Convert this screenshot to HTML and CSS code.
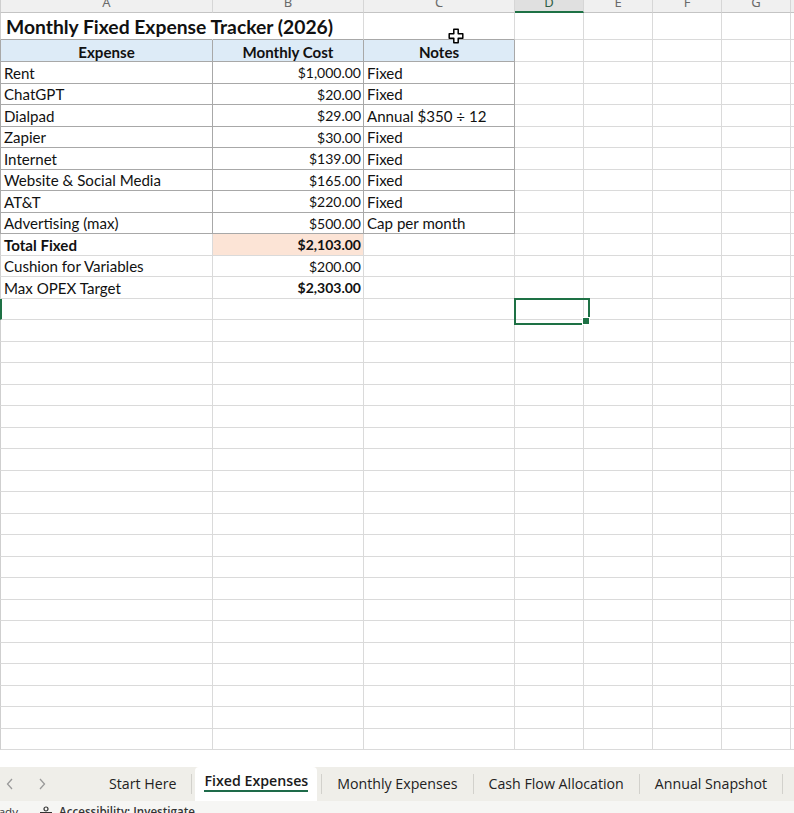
FILE: index.html
```html
<!DOCTYPE html>
<html>
<head>
<meta charset="utf-8">
<link rel="stylesheet" href="styles.css">
</head>
<body>
<div class="sheet">
  <div class="row colhdr">
    <i class="c"><span>A</span></i><i class="c"><span>B</span></i><i class="c"><span>C</span></i><i class="c selcol"><span>D</span></i><i class="c"><span>E</span></i><i class="c"><span>F</span></i><i class="c"><span>G</span></i><i class="c"></i>
  </div>
  <div class="row title">
    <i class="c tb nr title-text">Monthly Fixed Expense Tracker (2026)</i><i class="c tb"></i><i class="c tb"></i><i class="c"></i><i class="c"></i><i class="c"></i><i class="c"></i><i class="c"></i>
  </div>
  <div class="row hdr">
    <i class="c t h">Expense</i><i class="c t h">Monthly Cost</i><i class="c t h">Notes</i><i class="c"></i><i class="c"></i><i class="c"></i><i class="c"></i><i class="c"></i>
  </div>
  <div class="row d"><i class="c t">Rent</i><i class="c t n">$1,000.00</i><i class="c t">Fixed</i><i class="c"></i><i class="c"></i><i class="c"></i><i class="c"></i><i class="c"></i></div>
  <div class="row d"><i class="c t">ChatGPT</i><i class="c t n">$20.00</i><i class="c t">Fixed</i><i class="c"></i><i class="c"></i><i class="c"></i><i class="c"></i><i class="c"></i></div>
  <div class="row d"><i class="c t">Dialpad</i><i class="c t n">$29.00</i><i class="c t">Annual $350 ÷ 12</i><i class="c"></i><i class="c"></i><i class="c"></i><i class="c"></i><i class="c"></i></div>
  <div class="row d"><i class="c t">Zapier</i><i class="c t n">$30.00</i><i class="c t">Fixed</i><i class="c"></i><i class="c"></i><i class="c"></i><i class="c"></i><i class="c"></i></div>
  <div class="row d"><i class="c t">Internet</i><i class="c t n">$139.00</i><i class="c t">Fixed</i><i class="c"></i><i class="c"></i><i class="c"></i><i class="c"></i><i class="c"></i></div>
  <div class="row d"><i class="c t">Website &amp; Social Media</i><i class="c t n">$165.00</i><i class="c t">Fixed</i><i class="c"></i><i class="c"></i><i class="c"></i><i class="c"></i><i class="c"></i></div>
  <div class="row d"><i class="c t">AT&amp;T</i><i class="c t n">$220.00</i><i class="c t">Fixed</i><i class="c"></i><i class="c"></i><i class="c"></i><i class="c"></i><i class="c"></i></div>
  <div class="row d"><i class="c t">Advertising (max)</i><i class="c t n">$500.00</i><i class="c t">Cap per month</i><i class="c"></i><i class="c"></i><i class="c"></i><i class="c"></i><i class="c"></i></div>
  <div class="row d"><i class="c bold">Total Fixed</i><i class="c n bold total">$2,103.00</i><i class="c"></i><i class="c"></i><i class="c"></i><i class="c"></i><i class="c"></i><i class="c"></i></div>
  <div class="row d"><i class="c">Cushion for Variables</i><i class="c n">$200.00</i><i class="c"></i><i class="c"></i><i class="c"></i><i class="c"></i><i class="c"></i><i class="c"></i></div>
  <div class="row d"><i class="c">Max OPEX Target</i><i class="c n bold">$2,303.00</i><i class="c"></i><i class="c"></i><i class="c"></i><i class="c"></i><i class="c"></i><i class="c"></i></div>
  <div class="row d selrow"><i class="c"></i><i class="c"></i><i class="c"></i><i class="c sel"></i><i class="c"></i><i class="c"></i><i class="c"></i><i class="c"></i></div>
  <div class="row d"><i class="c"></i><i class="c"></i><i class="c"></i><i class="c"></i><i class="c"></i><i class="c"></i><i class="c"></i><i class="c"></i></div>
  <div class="row d"><i class="c"></i><i class="c"></i><i class="c"></i><i class="c"></i><i class="c"></i><i class="c"></i><i class="c"></i><i class="c"></i></div>
  <div class="row d"><i class="c"></i><i class="c"></i><i class="c"></i><i class="c"></i><i class="c"></i><i class="c"></i><i class="c"></i><i class="c"></i></div>
  <div class="row d"><i class="c"></i><i class="c"></i><i class="c"></i><i class="c"></i><i class="c"></i><i class="c"></i><i class="c"></i><i class="c"></i></div>
  <div class="row d"><i class="c"></i><i class="c"></i><i class="c"></i><i class="c"></i><i class="c"></i><i class="c"></i><i class="c"></i><i class="c"></i></div>
  <div class="row d"><i class="c"></i><i class="c"></i><i class="c"></i><i class="c"></i><i class="c"></i><i class="c"></i><i class="c"></i><i class="c"></i></div>
  <div class="row d"><i class="c"></i><i class="c"></i><i class="c"></i><i class="c"></i><i class="c"></i><i class="c"></i><i class="c"></i><i class="c"></i></div>
  <div class="row d"><i class="c"></i><i class="c"></i><i class="c"></i><i class="c"></i><i class="c"></i><i class="c"></i><i class="c"></i><i class="c"></i></div>
  <div class="row d"><i class="c"></i><i class="c"></i><i class="c"></i><i class="c"></i><i class="c"></i><i class="c"></i><i class="c"></i><i class="c"></i></div>
  <div class="row d"><i class="c"></i><i class="c"></i><i class="c"></i><i class="c"></i><i class="c"></i><i class="c"></i><i class="c"></i><i class="c"></i></div>
  <div class="row d"><i class="c"></i><i class="c"></i><i class="c"></i><i class="c"></i><i class="c"></i><i class="c"></i><i class="c"></i><i class="c"></i></div>
  <div class="row d"><i class="c"></i><i class="c"></i><i class="c"></i><i class="c"></i><i class="c"></i><i class="c"></i><i class="c"></i><i class="c"></i></div>
  <div class="row d"><i class="c"></i><i class="c"></i><i class="c"></i><i class="c"></i><i class="c"></i><i class="c"></i><i class="c"></i><i class="c"></i></div>
  <div class="row d"><i class="c"></i><i class="c"></i><i class="c"></i><i class="c"></i><i class="c"></i><i class="c"></i><i class="c"></i><i class="c"></i></div>
  <div class="row d"><i class="c"></i><i class="c"></i><i class="c"></i><i class="c"></i><i class="c"></i><i class="c"></i><i class="c"></i><i class="c"></i></div>
  <div class="row d"><i class="c"></i><i class="c"></i><i class="c"></i><i class="c"></i><i class="c"></i><i class="c"></i><i class="c"></i><i class="c"></i></div>
  <div class="row d"><i class="c"></i><i class="c"></i><i class="c"></i><i class="c"></i><i class="c"></i><i class="c"></i><i class="c"></i><i class="c"></i></div>
  <div class="row d"><i class="c"></i><i class="c"></i><i class="c"></i><i class="c"></i><i class="c"></i><i class="c"></i><i class="c"></i><i class="c"></i></div>
  <div class="row d"><i class="c"></i><i class="c"></i><i class="c"></i><i class="c"></i><i class="c"></i><i class="c"></i><i class="c"></i><i class="c"></i></div>
  <div class="row d"><i class="c"></i><i class="c"></i><i class="c"></i><i class="c"></i><i class="c"></i><i class="c"></i><i class="c"></i><i class="c"></i></div>
  <svg class="cursor" width="16" height="16" viewBox="0 0 16 16"><path d="M5.8 1.2h4.4v4.6h4.6v4.4h-4.6v4.6H5.8v-4.6H1.2V5.8h4.6z" fill="#fff" stroke="#000" stroke-width="1.5" stroke-linejoin="round"/></svg>
</div>
<div class="tabs">
  <div class="nav">
    <svg width="10" height="14" viewBox="0 0 10 14"><path d="M7 2L2.5 7L7 12" fill="none" stroke="#9a9a9a" stroke-width="1.3"/></svg>
    <svg width="10" height="14" viewBox="0 0 10 14"><path d="M3 2L7.5 7L3 12" fill="none" stroke="#9a9a9a" stroke-width="1.3"/></svg>
  </div>
  <span class="tab">Start Here</span>
  <span class="sep"></span>
  <span class="tab active"><span class="lbl">Fixed Expenses</span></span>
  <span class="sep"></span>
  <span class="tab">Monthly Expenses</span>
  <span class="sep"></span>
  <span class="tab">Cash Flow Allocation</span>
  <span class="sep"></span>
  <span class="tab">Annual Snapshot</span>
  <span class="sep"></span>
</div>
<div class="status">
  <span class="ready">Ready</span>
  <svg class="acc" width="16" height="14" viewBox="0 0 16 14"><circle cx="8" cy="3" r="2" fill="none" stroke="#333" stroke-width="1.2"/><path d="M2 6.5h12M8 6.5v7M5 13l3-4 3 4" fill="none" stroke="#333" stroke-width="1.2"/></svg>
  <span class="acctext">Accessibility: Investigate</span>
</div>
</body>
</html>
```
FILE: styles.css
```css
* {
  box-sizing: border-box;
  margin: 0;
  padding: 0;
}

html, body {
  width: 794px;
  height: 813px;
  overflow: hidden;
  background: #fff;
}

body {
  font-family: Lato, "Noto Sans", sans-serif;
  color: #000;
}

.sheet {
  position: relative;
  height: 767px;
  overflow: hidden;
}

.row {
  display: grid;
  grid-template-columns: 213px 151px 151px 69px 69px 69px 69px 1fr;
}

.c {
  display: flex;
  align-items: center;
  font-style: normal;
  font-size: 15.1px;
  white-space: nowrap;
  padding: 0 3px;
  border-right: 1px solid #dadada;
  border-bottom: 1px solid #dadada;
  min-width: 0;
  color: #111;
}

.row > .c:first-child {
  border-left: 1px solid #cfcfcf;
}

/* column headers */
.colhdr {
  height: 13px;
  background: #f0f0f0;
}

.colhdr .c {
  justify-content: center;
  align-items: flex-start;
  overflow: hidden;
  font-family: "Noto Sans", sans-serif;
  font-size: 13px;
  line-height: 13px;
  color: #6a6a6a;
  border-right-color: #d6d6d6;
  border-bottom-color: #c4c4c4;
}

.colhdr .c span {
  margin-top: -4px;
}

.colhdr .selcol {
  background: #e0e0e0;
  border-bottom: 2px solid #1e7145;
  color: #2f5e46;
}

/* title row */
.title {
  height: 27px;
}

.title .c {
  align-items: flex-end;
  padding-bottom: 1px;
}

.title-text {
  font-size: 19.3px;
  font-weight: 700;
  overflow: visible;
  padding-left: 5px;
}

.nr {
  border-right-color: transparent;
}

.tb {
  border-bottom-color: #a8a8a8;
}

/* table header */
.hdr {
  height: 22px;
}

.h {
  background: #ddebf7;
  font-weight: 700;
  justify-content: center;
  padding-top: 2px;
}

.t {
  border-right-color: #a8a8a8;
  border-bottom-color: #a8a8a8;
}

.row > .t:first-child {
  border-left-color: #a8a8a8;
}

.d:nth-child(even) {
  height: 22px;
}

.d:nth-child(odd) {
  height: 21px;
}

.n {
  justify-content: flex-end;
  padding-right: 2px;
  font-size: 14px;
}

.bold {
  font-weight: 700;
}

.total {
  background: #fce4d6;
}

/* selection */
.selrow > .c:first-child {
  border-left: 2px solid #1e7145;
}

.sel {
  position: relative;
}

.sel::after {
  content: "";
  position: absolute;
  left: -1px;
  top: -1px;
  width: 72px;
  height: 23px;
  border: 2px solid #1e7145;
  z-index: 2;
}

.sel::before {
  content: "";
  position: absolute;
  left: 67px;
  top: 18px;
  width: 6px;
  height: 6px;
  background: #1e7145;
  border: 1px solid #fff;
  z-index: 3;
}

.cursor {
  position: absolute;
  left: 448px;
  top: 28px;
  z-index: 5;
}

/* sheet tabs */
.tabs {
  height: 34px;
  background: #efeee9;
  display: flex;
  align-items: center;
  font-family: "Open Sans", "Noto Sans", sans-serif;
  font-size: 14.2px;
  color: #222;
}

.nav {
  width: 94px;
  display: flex;
  align-items: center;
  gap: 22px;
  padding-left: 5px;
}

.tab {
  padding: 0 15px;
  line-height: 20px;
  white-space: nowrap;
}

.tab:nth-of-type(3) {
  padding-left: 13px;
}

.sep {
  width: 1px;
  height: 20px;
  background: #d2d1cc;
}

.tab.active {
  align-self: stretch;
  background: #fff;
  margin: 0 4px 0 3px;
  padding: 4px 9px 0;
  border-radius: 4px 4px 0 0;
  font-weight: 600;
  color: #1a1a1a;
}

.tab.active .lbl {
  display: block;
  line-height: 19px;
  border-bottom: 2px solid #1e6b4a;
}

/* status bar */
.status {
  height: 12px;
  background: #f6f6f4;
  display: flex;
  align-items: flex-start;
  font-family: "Open Sans", "Noto Sans", sans-serif;
  font-size: 11.6px;
  line-height: 18px;
  color: #333;
  padding-top: 2px;
  overflow: hidden;
}

.ready {
  margin-left: -15px;
}

.acc {
  margin: 3px 0 0 20px;
}

.acctext {
  margin-left: 5px;
  font-weight: 600;
}
```
